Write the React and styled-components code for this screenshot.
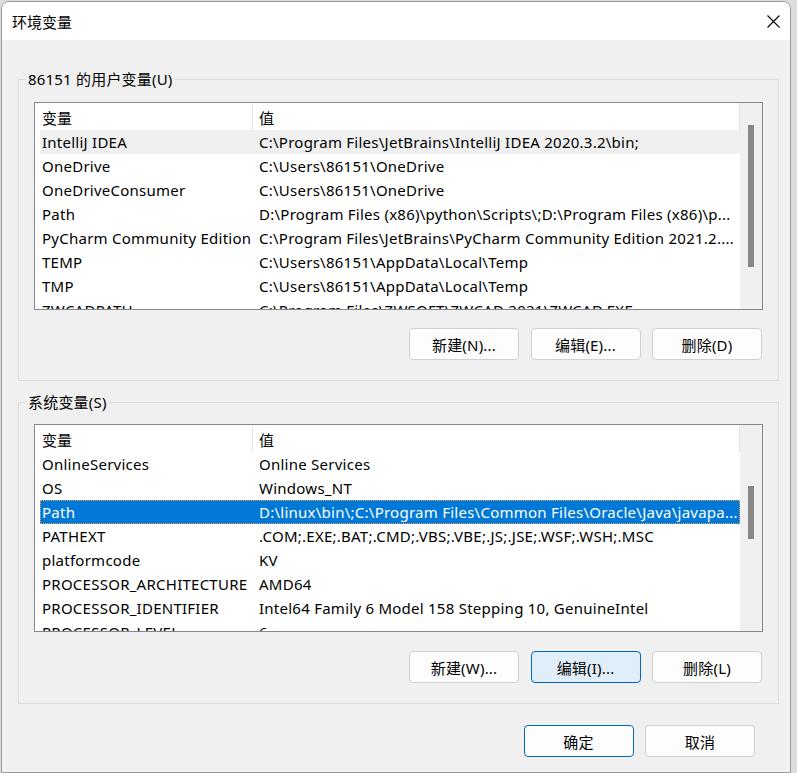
import React from 'react'
import styled, { createGlobalStyle } from 'styled-components'

const GlobalStyle = createGlobalStyle`
  html, body {
    margin: 0;
    padding: 0;
    background: #dcdcdc;
  }
  body {
    font-family: "Noto Sans", "Noto Sans CJK SC", sans-serif;
    font-size: 15px;
    color: #000;
  }
`

const Window = styled.div`
  box-sizing: border-box;
  width: 790px;
  height: 772px;
  margin: 1px 0 0 1px;
  border: 1px solid #9a9a9a;
  border-radius: 8px 8px 0 0;
  background: #f0f0f0;
  overflow: hidden;
  display: flex;
  flex-direction: column;
`

const TitleBar = styled.div`
  height: 38px;
  background: #fff;
  display: flex;
  align-items: center;
  justify-content: space-between;
  padding: 0 7px 0 10px;
  flex-shrink: 0;
`

const Title = styled.span`
  font-size: 15px;
  font-family: "Noto Sans CJK SC", sans-serif;
`

const Close = styled.div`
  width: 20px;
  height: 20px;
  display: flex;
  align-items: center;
  justify-content: center;
`

const Body = styled.div`
  padding: 39px 11px 0 16px;
  display: flex;
  flex-direction: column;
`

const Group = styled.div`
  position: relative;
  border: 1px solid #dcdcdc;
  padding: ${p => p.$top}px 15px ${p => p.$bottom}px 15px;
  margin-bottom: ${p => p.$gap}px;
`

const GroupLabel = styled.span`
  position: absolute;
  top: -11px;
  left: 7px;
  padding: 0 2px;
  background: #f0f0f0;
  font-size: 15px;
  letter-spacing: 0.2px;
  line-height: 20px;
`

const ListView = styled.div`
  height: ${p => p.$height}px;
  border: 1px solid #828790;
  background: #fff;
  display: flex;
  overflow: hidden;
`

const ListBody = styled.div`
  flex: 1;
  padding-left: 5px;
  overflow: hidden;
`

const Header = styled.div`
  height: 27px;
  display: grid;
  grid-template-columns: 213px 1fr;
`

const HeaderCell = styled.div`
  display: flex;
  align-items: center;
  padding-left: ${p => p.$pad}px;
  border-right: 1px solid #e5e5e5;
  margin-top: 1px;
  font-family: "Noto Sans CJK SC", sans-serif;
`

const Row = styled.div`
  height: 24px;
  display: grid;
  grid-template-columns: 212px 1fr;
  align-items: center;
  white-space: nowrap;
  overflow: hidden;
  letter-spacing: 0.25px;
  background: ${p => (p.$selected ? '#0078d7' : p.$hover ? '#f0f0f0' : 'transparent')};
  color: ${p => (p.$selected ? '#fff' : '#000')};
  outline: ${p => (p.$selected ? '1px dotted #e8a35a' : 'none')};
  outline-offset: -1px;
`

const Cell = styled.span`
  padding-left: ${p => p.$pad}px;
  overflow: hidden;
`

const ScrollTrack = styled.div`
  width: 22px;
  background: #f0f0f0;
  position: relative;
  flex-shrink: 0;
`

const Thumb = styled.div`
  position: absolute;
  left: 8px;
  width: 6px;
  background: #878787;
`

const Buttons = styled.div`
  display: flex;
  justify-content: flex-end;
  gap: 11.5px;
  margin-top: ${p => p.$mt}px;
  padding-right: ${p => p.$pr || 0}px;
`

const Button = styled.button`
  box-sizing: border-box;
  width: 110px;
  height: 32px;
  border-radius: 4px;
  border: 1px solid ${p => (p.$default ? '#0067c0' : '#d0d0d0')};
  background: ${p => (p.$focused ? '#e0eef9' : '#fdfdfd')};
  font-family: "Noto Sans", "Noto Sans CJK SC", sans-serif;
  font-size: 15px;
  letter-spacing: 0.2px;
  color: #000;
  padding: 0;
`

const userVars = [
  ['IntelliJ IDEA', 'C:\\Program Files\\JetBrains\\IntelliJ IDEA 2020.3.2\\bin;'],
  ['OneDrive', 'C:\\Users\\86151\\OneDrive'],
  ['OneDriveConsumer', 'C:\\Users\\86151\\OneDrive'],
  ['Path', 'D:\\Program Files (x86)\\python\\Scripts\\;D:\\Program Files (x86)\\p...'],
  ['PyCharm Community Edition', 'C:\\Program Files\\JetBrains\\PyCharm Community Edition 2021.2....'],
  ['TEMP', 'C:\\Users\\86151\\AppData\\Local\\Temp'],
  ['TMP', 'C:\\Users\\86151\\AppData\\Local\\Temp'],
  ['ZWCADPATH', 'C:\\Program Files\\ZWSOFT\\ZWCAD 2021\\ZWCAD.EXE'],
]

const sysVars = [
  ['OnlineServices', 'Online Services'],
  ['OS', 'Windows_NT'],
  ['Path', 'D:\\linux\\bin\\;C:\\Program Files\\Common Files\\Oracle\\Java\\javapa...'],
  ['PATHEXT', '.COM;.EXE;.BAT;.CMD;.VBS;.VBE;.JS;.JSE;.WSF;.WSH;.MSC'],
  ['platformcode', 'KV'],
  ['PROCESSOR_ARCHITECTURE', 'AMD64'],
  ['PROCESSOR_IDENTIFIER', 'Intel64 Family 6 Model 158 Stepping 10, GenuineIntel'],
  ['PROCESSOR_LEVEL', '6'],
]

function VarList({ rows, height, thumbTop, thumbHeight, hover, selected }) {
  return (
    <ListView $height={height}>
      <ListBody>
        <Header>
          <HeaderCell $pad={2}>变量</HeaderCell>
          <HeaderCell $pad={6}>值</HeaderCell>
        </Header>
        {rows.map(([name, value], i) => (
          <Row key={name} $hover={i === hover} $selected={i === selected}>
            <Cell $pad={2}>{name}</Cell>
            <Cell $pad={7}>{value}</Cell>
          </Row>
        ))}
      </ListBody>
      <ScrollTrack>
        <Thumb style={{ top: thumbTop, height: thumbHeight }} />
      </ScrollTrack>
    </ListView>
  )
}

export default function App() {
  return (
    <>
      <GlobalStyle />
      <Window>
        <TitleBar>
          <Title>环境变量</Title>
          <Close>
            <svg width="13" height="13" viewBox="0 0 13 13">
              <path d="M0.5 0.5L12.5 12.5M12.5 0.5L0.5 12.5" stroke="#000" strokeWidth="1.1" />
            </svg>
          </Close>
        </TitleBar>
        <Body>
          <Group $top={22} $bottom={20} $gap={21}>
            <GroupLabel>86151 的用户变量(U)</GroupLabel>
            <VarList rows={userVars} height={206} thumbTop={22} thumbHeight={142} hover={0} />
            <Buttons $mt={18} $pr={1}>
              <Button>新建(N)...</Button>
              <Button>编辑(E)...</Button>
              <Button>删除(D)</Button>
            </Buttons>
          </Group>
          <Group $top={21} $bottom={20} $gap={21}>
            <GroupLabel>系统变量(S)</GroupLabel>
            <VarList rows={sysVars} height={206} thumbTop={61} thumbHeight={53} selected={2} />
            <Buttons $mt={19} $pr={1}>
              <Button>新建(W)...</Button>
              <Button $default $focused>编辑(I)...</Button>
              <Button>删除(L)</Button>
            </Buttons>
          </Group>
          <Buttons $mt={0} $pr={24}>
            <Button $default>确定</Button>
            <Button>取消</Button>
          </Buttons>
        </Body>
      </Window>
    </>
  )
}
